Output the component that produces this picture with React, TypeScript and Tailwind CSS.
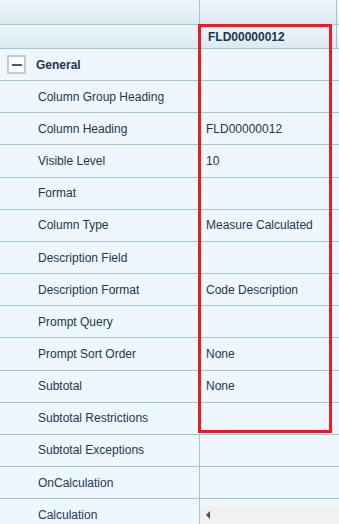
import React from "react";

const rows: [string, string][] = [
  ["Column Group Heading", ""],
  ["Column Heading", "FLD00000012"],
  ["Visible Level", "10"],
  ["Format", ""],
  ["Column Type", "Measure Calculated"],
  ["Description Field", ""],
  ["Description Format", "Code Description"],
  ["Prompt Query", ""],
  ["Prompt Sort Order", "None"],
  ["Subtotal", "None"],
  ["Subtotal Restrictions", ""],
  ["Subtotal Exceptions", ""],
  ["OnCalculation", ""],
  ["Calculation", ""],
];

export default function App() {
  return (
    <div
      className="relative w-[339px] h-[524px] overflow-hidden bg-[#eef7fd] text-[12px] text-[#1d3653]"
      style={{ fontFamily: '"Liberation Sans", Arial, sans-serif' }}
    >
      {/* header rows */}
      <div className="flex h-[25px] bg-gradient-to-b from-[#eef6fa] to-[#dde9f0] border-b border-[#a4c6d4]">
        <div className="w-[200px] border-r border-[#a4c6d4]" />
        <div className="w-[137px] border-r border-[#a4c6d4]" />
      </div>
      <div className="flex h-[24px] bg-gradient-to-b from-[#eef6fa] to-[#dde9f0] border-b border-[#a4c6d4]">
        <div className="w-[200px] border-r border-[#a4c6d4]" />
        <div className="w-[137px] border-r border-[#a4c6d4] flex items-center pl-[8px] font-bold">
          FLD00000012
        </div>
      </div>
      {/* General row */}
      <div className="flex h-[32.17px] border-b border-[#a4c6d4]">
        <div className="w-[200px] flex items-center pl-[7px]">
          <div className="w-[19px] h-[19px] border-2 border-[#c9c9c9] bg-white flex items-center justify-center">
            <div className="w-[10px] h-[2px] bg-[#555]" />
          </div>
          <span className="ml-[10px] font-bold">General</span>
        </div>
        <div className="flex-1" />
      </div>
      {rows.map(([k, v]) => (
        <div key={k} className="flex h-[32.17px] border-b border-[#a4c6d4]">
          <div className="w-[200px] border-r border-[#a4c6d4] flex items-center pl-[38px]">
            {k}
          </div>
          <div className="flex-1 flex items-center pl-[6px]">{v}</div>
        </div>
      ))}
      {/* red highlight box */}
      <div className="absolute left-[198px] top-[24px] w-[134px] h-[409px] border-[3px] border-[#ec1c24]" />
      {/* horizontal scrollbar */}
      <div className="absolute left-[200px] top-[506px] w-[139px] h-[18px] bg-[#f0f0f0] flex items-center pl-[6px]">
        <div className="w-0 h-0 border-y-[4px] border-y-transparent border-r-[4px] border-r-[#505050]" />
      </div>
    </div>
  );
}
